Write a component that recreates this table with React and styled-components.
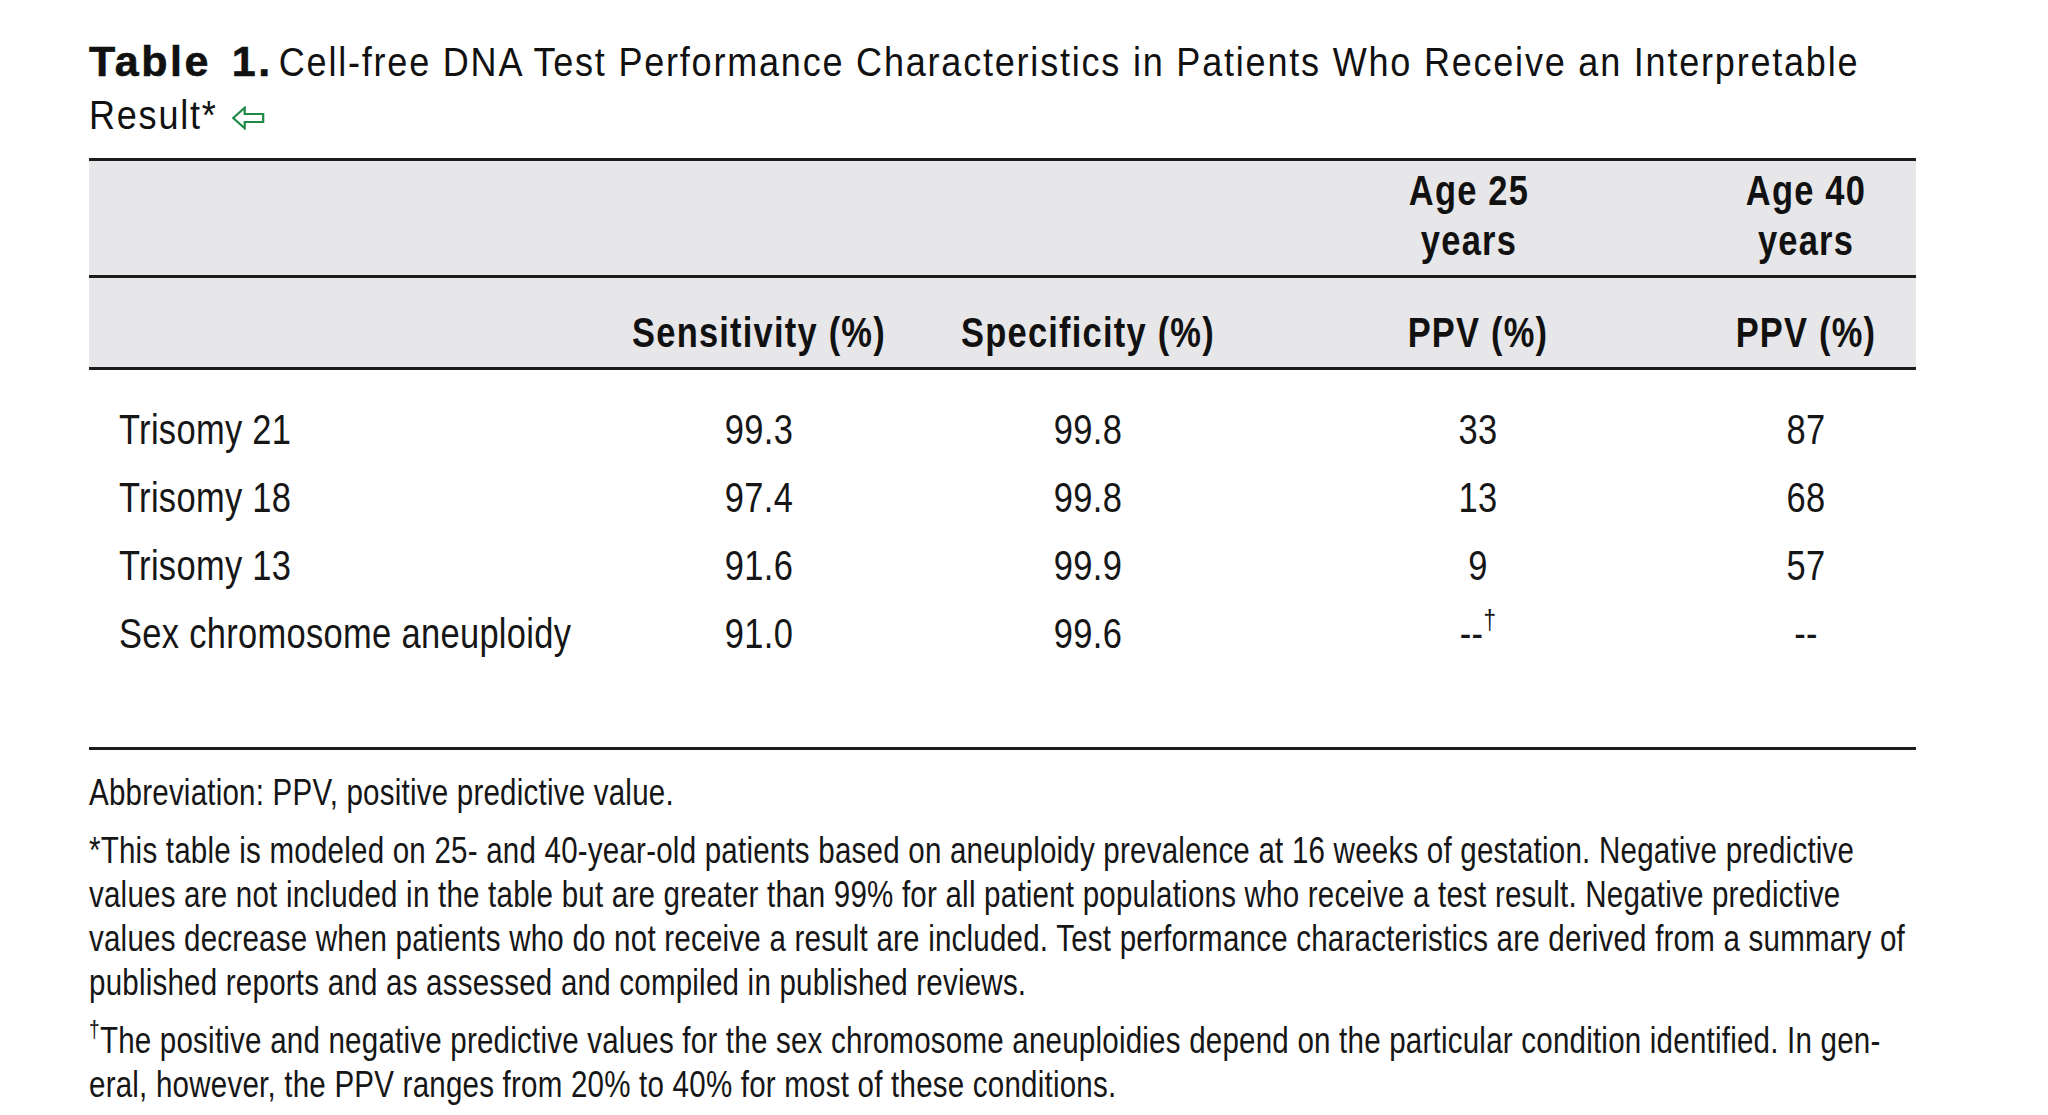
import styled, { createGlobalStyle } from "styled-components";

// el original usa una Helvetica condensada: Liberation Sans comprimida al 82% da el ancho de Arial Narrow
const SQUEEZE = 0.82;
// el título es algo más ancho que el cuerpo de la tabla
const TITLE_SQUEEZE = 0.9;
const px = (n) => `${(n / SQUEEZE).toFixed(2)}px`;
const COLS = [513, 314, 344, 436, 220].map(px).join(" ");
const SANS = `"Liberation Sans", Arial, Helvetica, sans-serif`;

const GlobalStyle = createGlobalStyle`
  html, body {
    margin: 0;
    padding: 0;
    background: #fff;
    overflow: hidden;
  }
  body {
    font-family: ${SANS};
    color: #161616;
  }
`;

const rows = [
  { label: "Trisomy 21", sens: "99.3", spec: "99.8", ppv25: "33", ppv40: "87" },
  { label: "Trisomy 18", sens: "97.4", spec: "99.8", ppv25: "13", ppv40: "68" },
  { label: "Trisomy 13", sens: "91.6", spec: "99.9", ppv25: "9", ppv40: "57" },
  { label: "Sex chromosome aneuploidy", sens: "91.0", spec: "99.6", ppv25: "--", ppv40: "--", mark25: "†" },
];

// flecha verde de vuelta al texto
function BackArrow() {
  return (
    <ArrowSvg
      width={(34 / TITLE_SQUEEZE).toFixed(2)}
      height="24"
      viewBox="0 0 34 24"
      preserveAspectRatio="none"
    >
      <polygon
        points="2,12 13.5,1.8 13.5,8 32,8 32,16 13.5,16 13.5,22.2"
        fill="none"
        stroke="#1e8a45"
        strokeWidth="2.2"
      />
    </ArrowSvg>
  );
}

export default function App() {
  return (
    <Page>
      <GlobalStyle />
      <Sheet>
        <Caption>
          <Label>Table 1.</Label> Cell-free DNA Test Performance Characteristics in Patients Who Receive an Interpretable
          <br />
          Result* <BackArrow />
        </Caption>

        <Table>
          <HeadRow $top={5}>
            <Cell />
            <Cell />
            <Cell />
            <Cell $align="center" $nudge={22}>Age 25<br />years</Cell>
            <Cell $align="center">Age 40<br />years</Cell>
          </HeadRow>
          <HeadRow $top={30}>
            <Cell />
            <Cell $align="center">Sensitivity (%)</Cell>
            <Cell $align="center">Specificity (%)</Cell>
            <Cell $align="center">PPV (%)</Cell>
            <Cell $align="center">PPV (%)</Cell>
          </HeadRow>
          <Body>
            {rows.map((r) => (
              <DataRow key={r.label}>
                <Cell $indent>{r.label}</Cell>
                <Cell $align="center">{r.sens}</Cell>
                <Cell $align="center">{r.spec}</Cell>
                <Cell $align="center">
                  {r.ppv25}
                  {r.mark25 && <Sup>{r.mark25}</Sup>}
                </Cell>
                <Cell $align="center">{r.ppv40}</Cell>
              </DataRow>
            ))}
          </Body>
        </Table>

        <Notes>
          <Note>Abbreviation: PPV, positive predictive value.</Note>
          <Note>
            *This table is modeled on 25- and 40-year-old patients based on aneuploidy prevalence at 16 weeks of gestation. Negative predictive
            <br />
            values are not included in the table but are greater than 99% for all patient populations who receive a test result. Negative predictive
            <br />
            values decrease when patients who do not receive a result are included. Test performance characteristics are derived from a summary of
            <br />
            published reports and as assessed and compiled in published reviews.
          </Note>
          <Note>
            <Sup>†</Sup>The positive and negative predictive values for the sex chromosome aneuploidies depend on the particular condition identified. In gen-
            <br />
            eral, however, the PPV ranges from 20% to 40% for most of these conditions.
          </Note>
        </Notes>
      </Sheet>
    </Page>
  );
}

const Page = styled.div`
  box-sizing: border-box;
  width: 2048px;
  padding: 35px 0 0 89px;
  overflow: hidden;
`;

const Sheet = styled.div`
  width: ${px(1827)};
  transform: scaleX(${SQUEEZE});
  transform-origin: left top;
`;

const Caption = styled.h1`
  margin: 0;
  font-weight: 400;
  font-size: 40px;
  line-height: 53px;
  letter-spacing: 2px;
  white-space: nowrap;
  color: #111;
  transform: scaleX(${TITLE_SQUEEZE / SQUEEZE});
  transform-origin: left top;
`;

// "Table 1." va en negrita de ancho normal: se devuelve el ancho que quita el título
const Label = styled.span`
  display: inline-block;
  font-size: 43px;
  font-weight: 700;
  letter-spacing: 2.6px;
  word-spacing: 6px;
  -webkit-text-stroke: 0.6px #111;
  transform: scaleX(${1 / TITLE_SQUEEZE});
  transform-origin: left center;
  margin-right: 14px;
`;

const ArrowSvg = styled.svg`
  display: inline-block;
  vertical-align: -1px;
  margin-left: 2px;
`;

const Table = styled.div`
  margin-top: 16px;
  border-top: 3px solid #1c1c1c;
`;

const HeadRow = styled.div`
  display: grid;
  grid-template-columns: ${COLS};
  align-items: end;
  padding: ${(p) => p.$top}px 0 9px;
  background: #e7e6e8;
  border-bottom: 3px solid #1c1c1c;
  font-weight: 700;
  font-size: 42px;
  line-height: 50px;
  letter-spacing: 1.5px;
  color: #111;
`;

const Body = styled.div`
  padding: 26px 0 79px;
  border-bottom: 3px solid #1c1c1c;
`;

const DataRow = styled.div`
  display: grid;
  grid-template-columns: ${COLS};
  font-size: 42px;
  line-height: 68px;
  letter-spacing: 0.4px;
`;

const Cell = styled.div`
  text-align: ${(p) => p.$align || "left"};
  padding-left: ${(p) => (p.$indent ? px(30) : "0")};
  padding-right: ${(p) => (p.$nudge ? `${p.$nudge}px` : "0")};
  white-space: nowrap;
`;

const Sup = styled.sup`
  font-size: 0.65em;
  line-height: 0;
  vertical-align: 0.7em;
`;

const Notes = styled.div`
  margin-top: 21px;
`;

const Note = styled.p`
  margin: 0;
  font-size: 36px;
  line-height: 44px;
  letter-spacing: 0.27px;
  white-space: nowrap;
  & + & {
    margin-top: 14px;
  }
`;
